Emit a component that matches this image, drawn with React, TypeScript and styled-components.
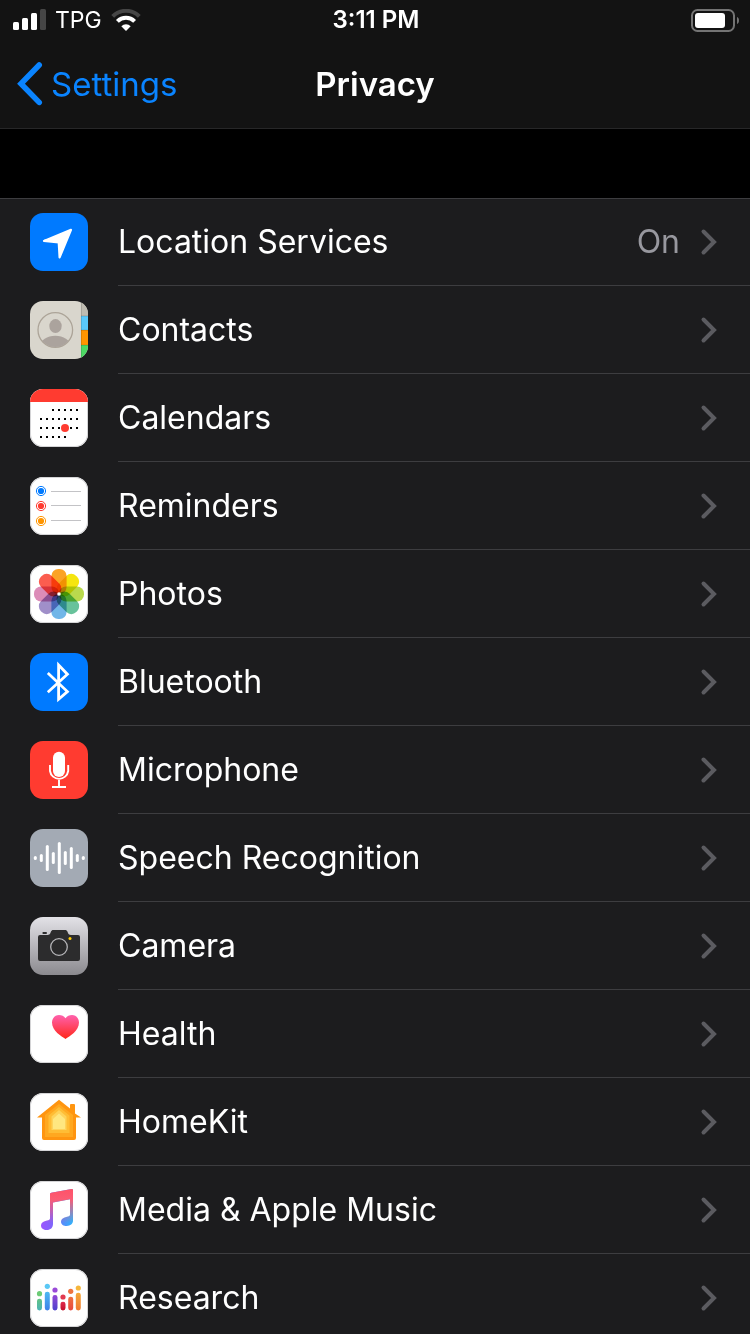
import React from "react";
import styled, { createGlobalStyle } from "styled-components";

const GlobalStyle = createGlobalStyle`
  *, *::before, *::after { box-sizing: border-box; }
  html { scrollbar-width: none; background: #000; }
  body {
    margin: 0;
    background: #000;
    color: #fff;
    font-family: Inter, "Liberation Sans", sans-serif;
    font-size: 33px;
    line-height: 40px;
  }
`;

const Header = styled.header`
  background: #131313;
  border-bottom: 1px solid #272728;
`;

const StatusBar = styled.div`
  display: grid;
  grid-template-columns: 1fr auto 1fr;
  align-items: center;
  height: 40px;
  padding: 0 11px 0 13px;
  font-size: 23px;
  line-height: 28px;
`;

const StatusGroup = styled.div<{ $end?: boolean }>`
  display: flex;
  align-items: center;
  gap: 9px;
  justify-content: ${(p) => (p.$end ? "flex-end" : "flex-start")};
`;

const Clock = styled.time`
  font-size: 24px;
  font-weight: 600;
`;

const NavBar = styled.nav`
  display: grid;
  grid-template-columns: 1fr auto 1fr;
  align-items: center;
  height: 88px;
  padding: 0 16px;
`;

const BackLink = styled.a`
  display: flex;
  align-items: center;
  justify-self: start;
  gap: 7px;
  color: #0a84ff;
  text-decoration: none;
`;

const Title = styled.h1`
  margin: 0;
  font-size: 33px;
  line-height: 40px;
  font-weight: 600;
`;

const List = styled.ul`
  list-style: none;
  margin: 69px 0 0;
  padding: 0;
  background: #1c1c1e;
  box-shadow: inset 0 1px 0 #3d3d40;
  font-size: 32px;
`;

const RowLink = styled.a`
  display: flex;
  align-items: center;
  gap: 30px;
  height: 88px;
  padding-left: 30px;
  color: inherit;
  text-decoration: none;
`;

const RowBody = styled.span`
  display: flex;
  flex: 1;
  align-items: center;
  align-self: stretch;
  gap: 20px;
  padding-right: 33px;
  border-bottom: 1px solid #3d3d40;
`;

const RowLabel = styled.span`
  flex: 1;
`;

const RowValue = styled.span`
  color: #98989f;
`;

const AppIcon = styled.svg<{ $bg: string }>`
  flex: none;
  width: 58px;
  height: 58px;
  border-radius: 13px;
  background: ${(p) => p.$bg};
  box-shadow: ${(p) => (p.$bg === "#fff" ? "inset 0 0 0 1px #d4d4d6" : "none")};
`;

const Glyph = styled.svg`
  display: block;
  flex: none;
`;

const Chevron = () => (
  <Glyph width="17" height="28" viewBox="0 0 17 28" fill="none" stroke="#5b5b60" strokeWidth="4" strokeLinecap="round" strokeLinejoin="miter" aria-hidden="true">
    <path d="M3.5 3.5 14 14 3.5 24.5" />
  </Glyph>
);

const LocationArt = () => (
  <path d="M14 27.9 41 16.8 29.6 44.4 28.7 29.3Z" fill="#fff" stroke="#fff" strokeWidth="2.2" strokeLinejoin="round" />
);

const ContactsArt = () => (
  <>
    <defs>
      <clipPath id="avatar"><circle cx="25.3" cy="29" r="17" /></clipPath>
    </defs>
    <rect x="51" width="7" height="15" fill="#bebbb1" />
    <rect x="51" y="15" width="7" height="14" fill="#5ac8fa" />
    <rect x="51" y="29" width="7" height="15" fill="#ff9500" />
    <rect x="51" y="44" width="7" height="14" fill="#4cd964" />
    <path d="M51 15h7M51 29.2h7M51 44.2h7" stroke="#000" strokeOpacity=".2" strokeWidth=".8" />
    <path d="M51.4 0v58" stroke="#000" strokeOpacity=".18" strokeWidth=".8" />
    <circle cx="25.3" cy="29" r="17.3" fill="none" stroke="#aca498" strokeWidth="1.3" />
    <ellipse cx="25.5" cy="25.1" rx="6.2" ry="7" fill="#aba39d" />
    <ellipse cx="25.3" cy="45" rx="15" ry="10.2" fill="#aba39d" clipPath="url(#avatar)" />
  </>
);

const calendarRows = [
  { y: 21, from: 2, to: 6 },
  { y: 30, from: 0, to: 6 },
  { y: 39, from: 0, to: 6 },
  { y: 48, from: 0, to: 4 },
];

const CalendarArt = () => (
  <>
    <rect width="58" height="13" fill="#ff3b30" />
    {calendarRows.map((row) =>
      Array.from({ length: row.to - row.from + 1 }, (_, i) => (
        <rect key={`${row.y}-${i}`} x={10 + (row.from + i) * 6} y={row.y - 1} width="2" height="2" fill="#000" />
      ))
    )}
    <circle cx="35" cy="39" r="4" fill="#ff3b30" />
  </>
);

const RemindersArt = () => (
  <>
    {[["#007aff", 14, 14.5], ["#ff3b30", 29, 28.5], ["#ff9500", 44, 43.5]].map(([color, cy, line]) => (
      <g key={color}>
        <circle cx="11" cy={cy} r="4.6" fill="none" stroke={String(color)} strokeWidth="1" />
        <circle cx="11" cy={cy} r="3.1" fill={String(color)} />
        <path d={`M21 ${line}h30`} stroke="#c3c3c6" />
      </g>
    ))}
  </>
);

const petals = ["#fba325", "#f5e50f", "#b9d94d", "#68c29b", "#71b6e8", "#a08fc9", "#dc8cb8", "#fb5d4f"];

const PhotosArt = () => (
  <g style={{ isolation: "isolate" }}>
    {petals.map((color, i) => (
      <rect key={color} x="21.4" y="4" width="15.2" height="25" rx="7" fill={color} transform={`rotate(${i * 45} 29 29)`} style={{ mixBlendMode: "multiply" }} />
    ))}
    <circle cx="29" cy="29" r="1.8" fill="#fff" />
  </g>
);

const BluetoothArt = () => (
  <path d="M17.8 20 37.4 38.6 28.6 46.2V12L37.4 21.2 17.8 39.2" fill="none" stroke="#fff" strokeWidth="2.8" />
);

const MicrophoneArt = () => (
  <>
    <rect x="23" y="10.8" width="12" height="25.2" rx="6" fill="#fff" />
    <path d="M20 24v6a9.2 9.2 0 0 0 18.2 0v-6M29 39v7M22 46h14" fill="none" stroke="#fff" strokeWidth="1.9" />
  </>
);

const SpeechArt = () => (
  <g stroke="#fff" strokeWidth="3" strokeLinecap="round">
    {[0.6, 2.6, 11.6, 4.6, 14.4, 5.6, 9.6, 2.6, 0.6].map((h, i) => (
      <path key={i} d={`M${5.3 + i * 6} ${29 - h}v${h * 2}`} />
    ))}
  </g>
);

const CameraArt = () => (
  <>
    <path d="M10 18h7.6c1.4 0 2.2-.5 2.7-1.7l.7-1.7c.4-1.1 1.1-1.6 2.3-1.6h11.8c1.2 0 1.9.5 2.3 1.6l.7 1.7c.5 1.2 1.3 1.7 2.7 1.7H48a2 2 0 0 1 2 2v22a2 2 0 0 1-2 2H10a2 2 0 0 1-2-2V20a2 2 0 0 1 2-2Z" fill="#2c2c2d" />
    <rect x="12.4" y="15" width="4.6" height="2" rx="1" fill="#2c2c2d" />
    <circle cx="29" cy="30" r="8.3" fill="#2a2a2b" stroke="#b5b5b8" strokeWidth="1.3" />
    <circle cx="40" cy="21.5" r="1.5" fill="#fc0" />
  </>
);

const HealthArt = () => (
  <>
    <defs>
      <linearGradient id="heart" x1="0" y1="0" x2="0" y2="1">
        <stop stopColor="#ff61ad" /><stop offset="1" stopColor="#ff2719" />
      </linearGradient>
    </defs>
    <path d="M35.5 34C31.5 31.6 22 25.8 22 17.6 22 13.2 25 10 29 10c2.8 0 5.1 1.3 6.5 3.2C36.9 11.3 39.2 10 42 10c4 0 7 3.2 7 7.6C49 25.8 39.500 31.6 35.5 34Z" fill="url(#heart)" />
  </>
);

const HomeArt = () => (
  <>
    <path d="M40 18v-6a1 1 0 0 1 1-1h3a1 1 0 0 1 1 1v8.5l6 4H46V45a2 2 0 0 1-2 2H14a2 2 0 0 1-2-2V24.5H7L29 6.8 40 15.6Z" fill="#ff9510" />
    <path d="M29 11 43 22V44H15V22Z" fill="#ffa820" />
    <path d="M29 14 39.500 22.500v17.500h-21V22.500Z" fill="#ffbd35" />
    <path d="M29 17 36.5 23.500v13.500h-15V23.500Z" fill="#ffd35b" />
    <path d="M29 20.500 35 26v10H23V26Z" fill="#ffe780" />
  </>
);

const MusicArt = () => (
  <>
    <defs>
      <linearGradient id="noteSide" x1="11" x2="43" y1="0" y2="0" gradientUnits="userSpaceOnUse">
        <stop stopColor="#9b55ff" /><stop offset=".35" stopColor="#8064fb" /><stop offset="1" stopColor="#2eb4fa" />
      </linearGradient>
      <linearGradient id="noteTop" x1="0" x2="0" y1="8" y2="42" gradientUnits="userSpaceOnUse">
        <stop stopColor="#ff5268" /><stop offset=".3" stopColor="#fb5c74" /><stop offset="1" stopColor="#fb5c74" stopOpacity="0" />
      </linearGradient>
    </defs>
    {["url(#noteSide)", "url(#noteTop)"].map((fill) => (
      <path key={fill} fill={fill} d="M43 9v30.6c0 3.4-2.6 5.4-6.2 5.4-3.4 0-5.8-1.6-5.8-4.3 0-2.6 2-4.2 5.2-4.8l2-.4c1.3-.3 1.8-.8 1.8-2V18.3L23 21.6V43c0 3.8-2.5 6-6.2 6-3.4 0-5.8-1.7-5.8-4.5 0-2.5 2-4.2 5.2-4.8l2-.4c1.3-.3 1.8-.8 1.8-2V13.3c0-.9.4-1.3 1.3-1.5L41.5 8c1-.2 1.5.2 1.5 1Z" />
    ))}
  </>
);

const researchBars = [
  { x: 9.5, top: 29.7, dot: 24.7, cap: "#6ccb76", from: "#62c382", to: "#4cb3b8" },
  { x: 17.3, top: 22.7, dot: 17.3, cap: "#5ac8f5", from: "#4cb9f2", to: "#3c80e8" },
  { x: 25, top: 26, dot: 21, cap: "#9a4ad8", from: "#9347d6", to: "#4d42cc" },
  { x: 33, top: 32.7, dot: 28, cap: "#e23a50", from: "#df2c4e", to: "#c40f2c" },
  { x: 40.7, top: 27.7, dot: 22.3, cap: "#ee7440", from: "#ee7140", to: "#e8483e" },
  { x: 48.3, top: 23.7, dot: 19, cap: "#f6b63c", from: "#f5a93a", to: "#ef7a30" },
];

const ResearchArt = () => (
  <>
    {researchBars.map((bar, i) => (
      <g key={bar.x}>
        <defs>
          <linearGradient id={`bar${i}`} x1="0" y1="0" x2="0" y2="1">
            <stop stopColor={bar.from} /><stop offset="1" stopColor={bar.to} />
          </linearGradient>
        </defs>
        <rect x={bar.x - 2.5} y={bar.top} width="5" height={41.4 - bar.top} rx="2.4" fill={`url(#bar${i})`} />
        <circle cx={bar.x} cy={bar.dot} r="2.6" fill={bar.cap} />
      </g>
    ))}
  </>
);

type Item = { label: string; bg: string; Art: React.FC; value?: string };

const items: Item[] = [
  { label: "Location Services", bg: "#007aff", Art: LocationArt, value: "On" },
  { label: "Contacts", bg: "#d9d6cd", Art: ContactsArt },
  { label: "Calendars", bg: "#fff", Art: CalendarArt },
  { label: "Reminders", bg: "#fff", Art: RemindersArt },
  { label: "Photos", bg: "#fff", Art: PhotosArt },
  { label: "Bluetooth", bg: "#007aff", Art: BluetoothArt },
  { label: "Microphone", bg: "#ff3b30", Art: MicrophoneArt },
  { label: "Speech Recognition", bg: "#a3aab4", Art: SpeechArt },
  { label: "Camera", bg: "linear-gradient(#e3e2e7, #8b8a8f)", Art: CameraArt },
  { label: "Health", bg: "#fff", Art: HealthArt },
  { label: "HomeKit", bg: "#fff", Art: HomeArt },
  { label: "Media & Apple Music", bg: "#fff", Art: MusicArt },
  { label: "Research", bg: "#fff", Art: ResearchArt },
];

const SignalIcon = () => (
  <Glyph width="33" height="22" viewBox="0 0 33 22" fill="#fff" aria-hidden="true">
    <rect y="13" width="6" height="8" rx="1.5" />
    <rect x="9" y="9" width="6" height="12" rx="1.5" />
    <rect x="18" y="4" width="6" height="17" rx="1.5" />
    <rect x="27" width="6" height="21" rx="1.5" fill="#464646" />
  </Glyph>
);

const WifiIcon = () => (
  <Glyph width="30" height="22" viewBox="0 0 30 22" fill="none" strokeWidth="4" aria-hidden="true">
    <path d="M1.7 7.4a18.6 18.6 0 0 1 26.6 0" stroke="#464646" />
    <path d="M6.4 12.3a12.2 12.2 0 0 1 17.2 0" stroke="#fff" />
    <path d="M10.3 17.2a6.8 6.8 0 0 1 9.4 0L15 22Z" fill="#fff" />
  </Glyph>
);

const BatteryIcon = () => (
  <Glyph width="48" height="23" viewBox="0 0 48 23" aria-hidden="true">
    <rect x="1" y="1" width="42" height="21" rx="5.5" fill="none" stroke="#747474" strokeWidth="2" />
    <rect x="4" y="4" width="30" height="15" rx="3" fill="#fff" />
    <path d="M46 8c1.3.5 2 1.8 2 3.5S47.3 14.5 46 15Z" fill="#747474" />
  </Glyph>
);

const BackIcon = () => (
  <Glyph width="28" height="44" viewBox="0 0 28 44" fill="none" stroke="currentColor" strokeWidth="5.6" strokeLinecap="round" aria-hidden="true">
    <path d="M23.2 3 5 21.700 23.200 40.400" />
  </Glyph>
);

export default function App() {
  return (
    <>
      <GlobalStyle />
      <Header>
        <StatusBar>
          <StatusGroup>
            <SignalIcon />
            <span>TPG</span>
            <WifiIcon />
          </StatusGroup>
          <Clock>3:11 PM</Clock>
          <StatusGroup $end>
            <BatteryIcon />
          </StatusGroup>
        </StatusBar>
        <NavBar>
          <BackLink href="#settings">
            <BackIcon />
            Settings
          </BackLink>
          <Title>Privacy</Title>
        </NavBar>
      </Header>
      <main>
        <List>
          {items.map(({ label, bg, Art, value }) => (
            <li key={label}>
              <RowLink href="#">
                <AppIcon $bg={bg} viewBox="0 0 58 58" aria-hidden="true">
                  <Art />
                </AppIcon>
                <RowBody>
                  <RowLabel>{label}</RowLabel>
                  {value && <RowValue>{value}</RowValue>}
                  <Chevron />
                </RowBody>
              </RowLink>
            </li>
          ))}
        </List>
      </main>
    </>
  );
}
